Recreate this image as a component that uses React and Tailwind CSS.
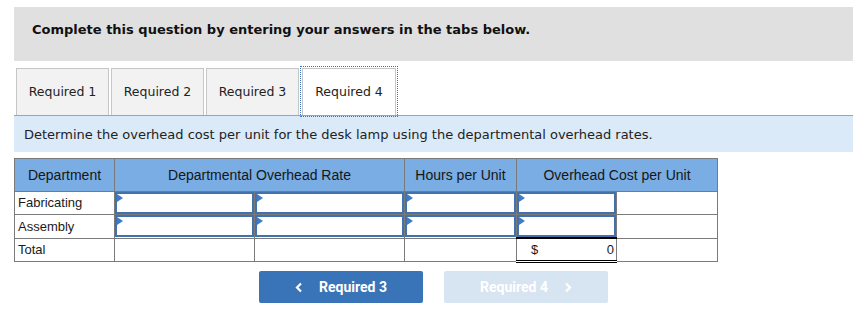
import React from 'react'

const Marker = () => (
    <span className="absolute left-0 top-0 w-0 h-0 border-t-[4px] border-b-[4px] border-l-[6px] border-t-transparent border-b-transparent border-l-[#3d7cc9]" />
)

const InputCell = () => (
    <td className="border border-[#7a7a7a] p-0">
        <div className="relative h-[22px] border-2 border-[#4272ad] bg-white">
            <Marker />
        </div>
    </td>
)

const Cell = ({ children }) => (
    <td className="border border-[#7a7a7a] p-0 text-left">
        <div className="h-[22px] px-[3px] flex items-center">{children}</div>
    </td>
)

const tabs = ['Required 1', 'Required 2', 'Required 3', 'Required 4']

export default function App() {
    return (
        <div className="w-[853px] h-[318px] bg-white overflow-hidden pt-[7px] pl-[14px]">
            <div className="h-[54px] bg-[#e0e0e0] pt-[13px] pl-[18px] font-['DejaVu_Sans',sans-serif] text-[13px] font-bold text-[#111]">
                Complete this question by entering your answers in the tabs below.
            </div>

            <div className="mt-[7px] flex items-end gap-[2px] pl-[2px] h-[48px] border-b border-[#a3a3a3]">
                {tabs.map((t, i) => {
                    const active = i === 3
                    return (
                        <div
                            key={t}
                            className={
                                active
                                    ? 'w-[94px] h-[47px] ml-[1px] pt-[1px] flex items-center justify-center bg-white border border-b-0 border-[#c6c6c6] outline-1 outline-dotted outline-[#3a73c2] outline-offset-1 font-["DejaVu_Sans",sans-serif] text-[12.5px] text-[#222]'
                                    : 'w-[93px] h-[47px] pt-[1px] flex items-center justify-center bg-[#f2f2f2] border border-b-0 border-[#c6c6c6] font-["DejaVu_Sans",sans-serif] text-[12.5px] text-[#222]'
                            }
                        >
                            {t}
                        </div>
                    )
                })}
            </div>

            <div className="h-[36px] bg-[#dbeaf8] flex items-center pt-[1px] pl-[10px] font-['DejaVu_Sans',sans-serif] text-[13px] text-[#222]">
                Determine the overhead cost per unit for the desk lamp using the departmental overhead rates.
            </div>

            <table className="mt-[6px] border-collapse table-fixed w-[703px] font-['Liberation_Sans',Arial,sans-serif] text-[13px] text-[#1a1a1a]">
                <colgroup>
                    <col className="w-[100px]" />
                    <col className="w-[140px]" />
                    <col className="w-[150px]" />
                    <col className="w-[112px]" />
                    <col className="w-[100px]" />
                    <col className="w-[101px]" />
                </colgroup>
                <thead>
                    <tr className="bg-[#79ade3] text-[14px] text-[#161616]">
                        <th className="border border-[#7a7a7a] h-[33px] font-normal">Department</th>
                        <th colSpan={2} className="border border-[#7a7a7a] font-normal">Departmental Overhead Rate</th>
                        <th className="border border-[#7a7a7a] font-normal">Hours per Unit</th>
                        <th colSpan={2} className="border border-[#7a7a7a] font-normal">Overhead Cost per Unit</th>
                    </tr>
                </thead>
                <tbody>
                    {['Fabricating', 'Assembly'].map((r) => (
                        <tr key={r}>
                            <Cell>{r}</Cell>
                            <InputCell />
                            <InputCell />
                            <InputCell />
                            <InputCell />
                            <Cell />
                        </tr>
                    ))}
                    <tr>
                        <Cell>Total</Cell>
                        <Cell />
                        <Cell />
                        <Cell />
                        <td className="border-x border-[#7a7a7a] border-t-2 border-t-black border-b-[3px] border-b-black border-double p-0">
                            <div className="h-[21px] flex items-center justify-between pl-[14px] pr-[2px]">
                                <span>$</span>
                                <span>0</span>
                            </div>
                        </td>
                        <Cell />
                    </tr>
                </tbody>
            </table>

            <div className="mt-[8px] flex justify-center gap-[21px] font-['Roboto',sans-serif] text-[14px] font-bold text-white">
                <button className="w-[164px] h-[32px] rounded-[2px] bg-[#3a74b8] flex items-center justify-center gap-[16px]">
                    <svg width="8" height="11" viewBox="0 0 8 11">
                        <polyline points="6,1.5 2,5.5 6,9.5" fill="none" stroke="white" strokeWidth="2.2" />
                    </svg>
                    <span>Required 3</span>
                </button>
                <button className="w-[164px] h-[32px] rounded-[2px] bg-[#d7e4f2] flex items-center justify-center gap-[16px]">
                    <span>Required 4</span>
                    <svg width="8" height="11" viewBox="0 0 8 11">
                        <polyline points="2,1.5 6,5.5 2,9.5" fill="none" stroke="white" strokeWidth="2.2" />
                    </svg>
                </button>
            </div>
        </div>
    )
}
